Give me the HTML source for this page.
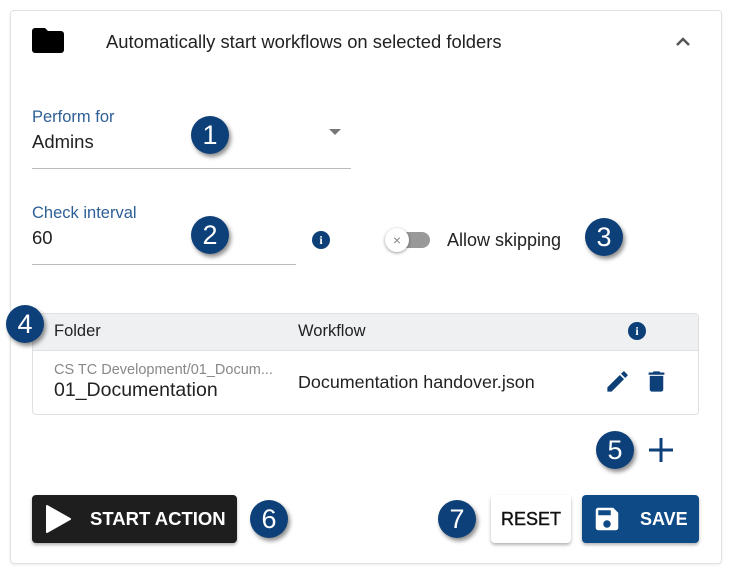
<!DOCTYPE html>
<html><head><meta charset="utf-8"><style>
*{box-sizing:border-box;margin:0;padding:0}
body{width:730px;height:575px;background:#fff;font-family:"Liberation Sans",sans-serif;position:relative;overflow:hidden;color:#222}
.a{position:absolute;white-space:nowrap}
.card{left:10px;top:10px;width:712px;height:554px;border:1px solid #e2e2e2;border-radius:4px;box-shadow:0 1px 2px rgba(0,0,0,.08)}
.badge{position:absolute;width:38px;height:38px;border-radius:50%;background:#0d3f78;color:#fff;font-size:27px;text-align:center;line-height:38px;box-shadow:2px 3px 4px rgba(0,0,0,.45)}
.lbl{color:#2d5f96;font-size:16.5px}
.val{font-size:18.5px;color:#222}
.info{position:absolute;width:18px;height:18px;border-radius:50%;background:#0d3f78;color:#fff;font:bold 12px "Liberation Serif",serif;text-align:center;line-height:18px}
.btn{position:absolute;top:495px;height:48px;border-radius:4px;font-weight:bold;font-size:18px;line-height:48px;box-shadow:0 2px 3px rgba(0,0,0,.3);white-space:nowrap}
</style></head><body>
<div class="a card"></div>
<svg class="a" style="left:32px;top:28px" width="32" height="25" viewBox="0 0 32 25"><path d="M3 0h10l3 3h13a3 3 0 0 1 3 3v16a3 3 0 0 1-3 3H3a3 3 0 0 1-3-3V3a3 3 0 0 1 3-3z" fill="#000"/></svg>
<div class="a" style="left:106px;top:31px;font-size:18.4px">Automatically start workflows on selected folders</div>
<svg class="a" style="left:675px;top:36px" width="16" height="10" viewBox="0 0 16 10"><path d="M2 9l6-6 6 6" stroke="#555" stroke-width="2.5" fill="none"/></svg>

<div class="a lbl" style="left:32px;top:108px">Perform for</div>
<div class="a val" style="left:32px;top:131px">Admins</div>
<div class="a" style="left:32px;top:168px;width:319px;height:1px;background:#bbb"></div>
<div class="a" style="left:329px;top:129px;border-left:6px solid transparent;border-right:6px solid transparent;border-top:6px solid #777"></div>
<div class="badge" style="left:191px;top:116px">1</div>

<div class="a lbl" style="left:32px;top:204px">Check interval</div>
<div class="a val" style="left:32px;top:227px">60</div>
<div class="a" style="left:32px;top:264px;width:264px;height:1px;background:#bbb"></div>
<div class="badge" style="left:191px;top:216px">2</div>
<div class="info" style="left:312px;top:231px">i</div>

<div class="a" style="left:390px;top:232px;width:40px;height:16px;border-radius:8px;background:#999"></div>
<div class="a" style="left:385px;top:228px;width:24px;height:24px;border-radius:50%;background:#fff;box-shadow:0 1px 3px rgba(0,0,0,.4);color:#888;font-size:14px;text-align:center;line-height:24px">×</div>
<div class="a" style="left:447px;top:230px;font-size:18px">Allow skipping</div>
<div class="badge" style="left:585px;top:218px">3</div>

<div class="a" style="left:32px;top:313px;width:667px;height:102px;border:1px solid #e0e0e0;border-radius:4px;overflow:hidden">
<div style="height:37px;background:#eef0f2;border-bottom:1px solid #e0e0e0"></div>
</div>
<div class="a" style="left:54px;top:322px;font-size:16.5px">Folder</div>
<div class="a" style="left:298px;top:322px;font-size:16.5px">Workflow</div>
<div class="info" style="left:628px;top:322px">i</div>
<div class="a" style="left:54px;top:362px;font-size:14.5px;color:#888">CS TC Development/01_Docum...</div>
<div class="a" style="left:54px;top:379px;font-size:19.5px">01_Documentation</div>
<div class="a" style="left:298px;top:372px;font-size:17.9px">Documentation handover.json</div>
<svg class="a" style="left:604px;top:368px" width="27" height="27" viewBox="0 0 24 24"><path d="M3 17.25V21h3.75L17.81 9.94l-3.75-3.75L3 17.25zM20.71 7.04a1 1 0 0 0 0-1.41l-2.34-2.34a1 1 0 0 0-1.41 0l-1.83 1.830 3.75 3.75 1.83-1.83z" fill="#0d3f78"/></svg>
<svg class="a" style="left:643px;top:368px" width="27" height="27" viewBox="0 0 24 24"><path d="M6 19a2 2 0 0 0 2 2h8a2 2 0 0 0 2-2V7H6v12zM19 4h-3.5l-1-1h-5l-1 1H5v2h14V4z" fill="#0d3f78"/></svg>
<div class="badge" style="left:6px;top:305px">4</div>

<div class="badge" style="left:596px;top:431px">5</div>
<svg class="a" style="left:648px;top:437px" width="26" height="26" viewBox="0 0 26 26"><path d="M13 1v24M1 13h24" stroke="#0d3f78" stroke-width="3"/></svg>

<div class="btn" style="left:32px;width:205px;background:#1e1e1e;color:#fff;padding-left:58px;font-size:18.5px">START ACTION</div>
<svg class="a" style="left:44px;top:504px" width="28" height="30" viewBox="0 0 28 30"><path d="M3 2l23 13L3 28z" fill="#fff" stroke="#fff" stroke-width="2" stroke-linejoin="round"/></svg>
<div class="badge" style="left:250px;top:500px">6</div>
<div class="badge" style="left:438px;top:500px">7</div>
<div class="btn" style="left:491px;width:80px;background:#fff;color:#111;text-align:center;font-weight:normal;font-size:18px;-webkit-text-stroke:0.4px #111">RESET</div>
<div class="btn" style="left:582px;width:117px;background:#0e4a86;color:#fff;padding-left:58px">SAVE</div>
<svg class="a" style="left:592px;top:504px" width="30" height="30" viewBox="0 0 24 24"><path d="M17 3H5a2 2 0 0 0-2 2v14a2 2 0 0 0 2 2h14a2 2 0 0 0 2-2V7l-4-4zm-5 16a3 3 0 1 1 0-6 3 3 0 0 1 0 6zm3-10H5V5h10v4z" fill="#fff"/></svg>
</body></html>
